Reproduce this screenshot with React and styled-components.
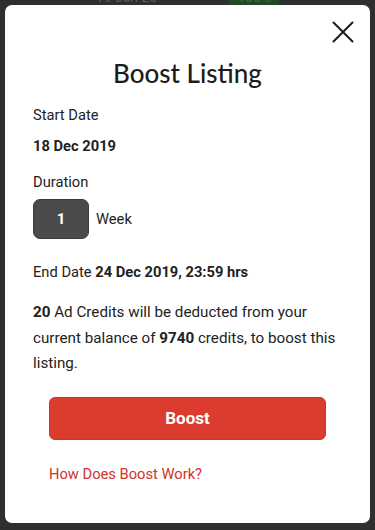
import React from "react";
import styled, { createGlobalStyle } from "styled-components";

const GlobalStyle = createGlobalStyle`
  html, body {
    margin: 0;
    padding: 0;
    background: #2f2f2f;
  }
  body {
    font-family: Roboto, "Liberation Sans", sans-serif;
    color: #222;
  }
`;

const Page = styled.div`
  position: relative;
  width: 375px;
  height: 530px;
  overflow: hidden;
  background: #2f2f2f;
  padding: 5px 5px 7px 5px;
  box-sizing: border-box;
`;

const Behind = styled.div`
  position: absolute;
  top: -11px;
  left: 0;
  right: 0;
  display: flex;
  justify-content: center;
  gap: 72px;
  font-size: 14px;
  color: #5a5a5a;
`;

const Badge = styled.span`
  background: #1f4a22;
  color: #3c6b3f;
  padding: 0 8px;
`;

const Modal = styled.div`
  position: relative;
  height: 100%;
  background: #fff;
  border-radius: 7px;
  padding: 0 28px;
  box-sizing: border-box;
`;

const CloseButton = styled.button`
  position: absolute;
  top: 13px;
  right: 13px;
  width: 28px;
  height: 28px;
  padding: 0;
  border: none;
  background: none;
  display: flex;
  align-items: center;
  justify-content: center;
`;

const Title = styled.h1`
  margin: 0;
  padding-top: 52px;
  text-align: center;
  font-family: Lato, "Noto Sans", sans-serif;
  font-weight: 500;
  font-size: 26px;
  line-height: 32px;
  color: #1c1c1c;
`;

const Label = styled.div`
  margin-top: ${(p) => p.$top || 0}px;
  font-size: 14.7px;
  line-height: 20px;
  font-weight: ${(p) => (p.$bold ? 700 : 400)};
`;

const DurationRow = styled.div`
  margin-top: 7px;
  display: flex;
  align-items: center;
  gap: 7px;
  font-size: 14.7px;
`;

const WeekBox = styled.div`
  width: 56px;
  height: 40px;
  box-sizing: border-box;
  border: 1px solid #3a3a3a;
  border-radius: 7px;
  background: #4b4b4b;
  color: #fff;
  font-weight: 700;
  font-size: 15px;
  display: flex;
  align-items: center;
  justify-content: center;
`;

const Note = styled.p`
  margin: 18px -4px 0 0;
  font-size: 15.2px;
  line-height: 25.5px;
`;

const Actions = styled.div`
  padding: 0 16px;
`;

const BoostButton = styled.button`
  margin-top: 20px;
  width: 100%;
  height: 43px;
  border: 1px solid #d0352a;
  border-radius: 6px;
  background: #dc3b2f;
  color: #fff;
  font-family: Roboto, "Liberation Sans", sans-serif;
  font-weight: 700;
  font-size: 17px;
`;

const HelpLink = styled.a`
  display: block;
  margin-top: 24px;
  color: #cf3329;
  font-size: 14.7px;
  line-height: 20px;
  text-decoration: none;
`;

const App = () => {
  return (
    <>
      <GlobalStyle />
      <Page>
        <Behind>
          <span>19 Jan 20</span>
          <Badge>100%</Badge>
        </Behind>
        <Modal>
          <CloseButton aria-label="Close">
            <svg width="22" height="22" viewBox="0 0 22 22">
              <path d="M1.5 1.5 L20.5 20.5 M20.5 1.5 L1.5 20.5" stroke="#1c1c1c" strokeWidth="2" strokeLinecap="round" />
            </svg>
          </CloseButton>
          <Title>Boost Listing</Title>
          <Label $top={16}>Start Date</Label>
          <Label $top={11} $bold>18 Dec 2019</Label>
          <Label $top={16}>Duration</Label>
          <DurationRow>
            <WeekBox>1</WeekBox>
            <span>Week</span>
          </DurationRow>
          <Label $top={23}>
            End Date <b>24 Dec 2019, 23:59 hrs</b>
          </Label>
          <Note>
            <b>20</b> Ad Credits will be deducted from your current balance of{" "}
            <b>9740</b> credits, to boost this listing.
          </Note>
          <Actions>
            <BoostButton>Boost</BoostButton>
            <HelpLink href="#">How Does Boost Work?</HelpLink>
          </Actions>
        </Modal>
      </Page>
    </>
  );
};

export default App;
